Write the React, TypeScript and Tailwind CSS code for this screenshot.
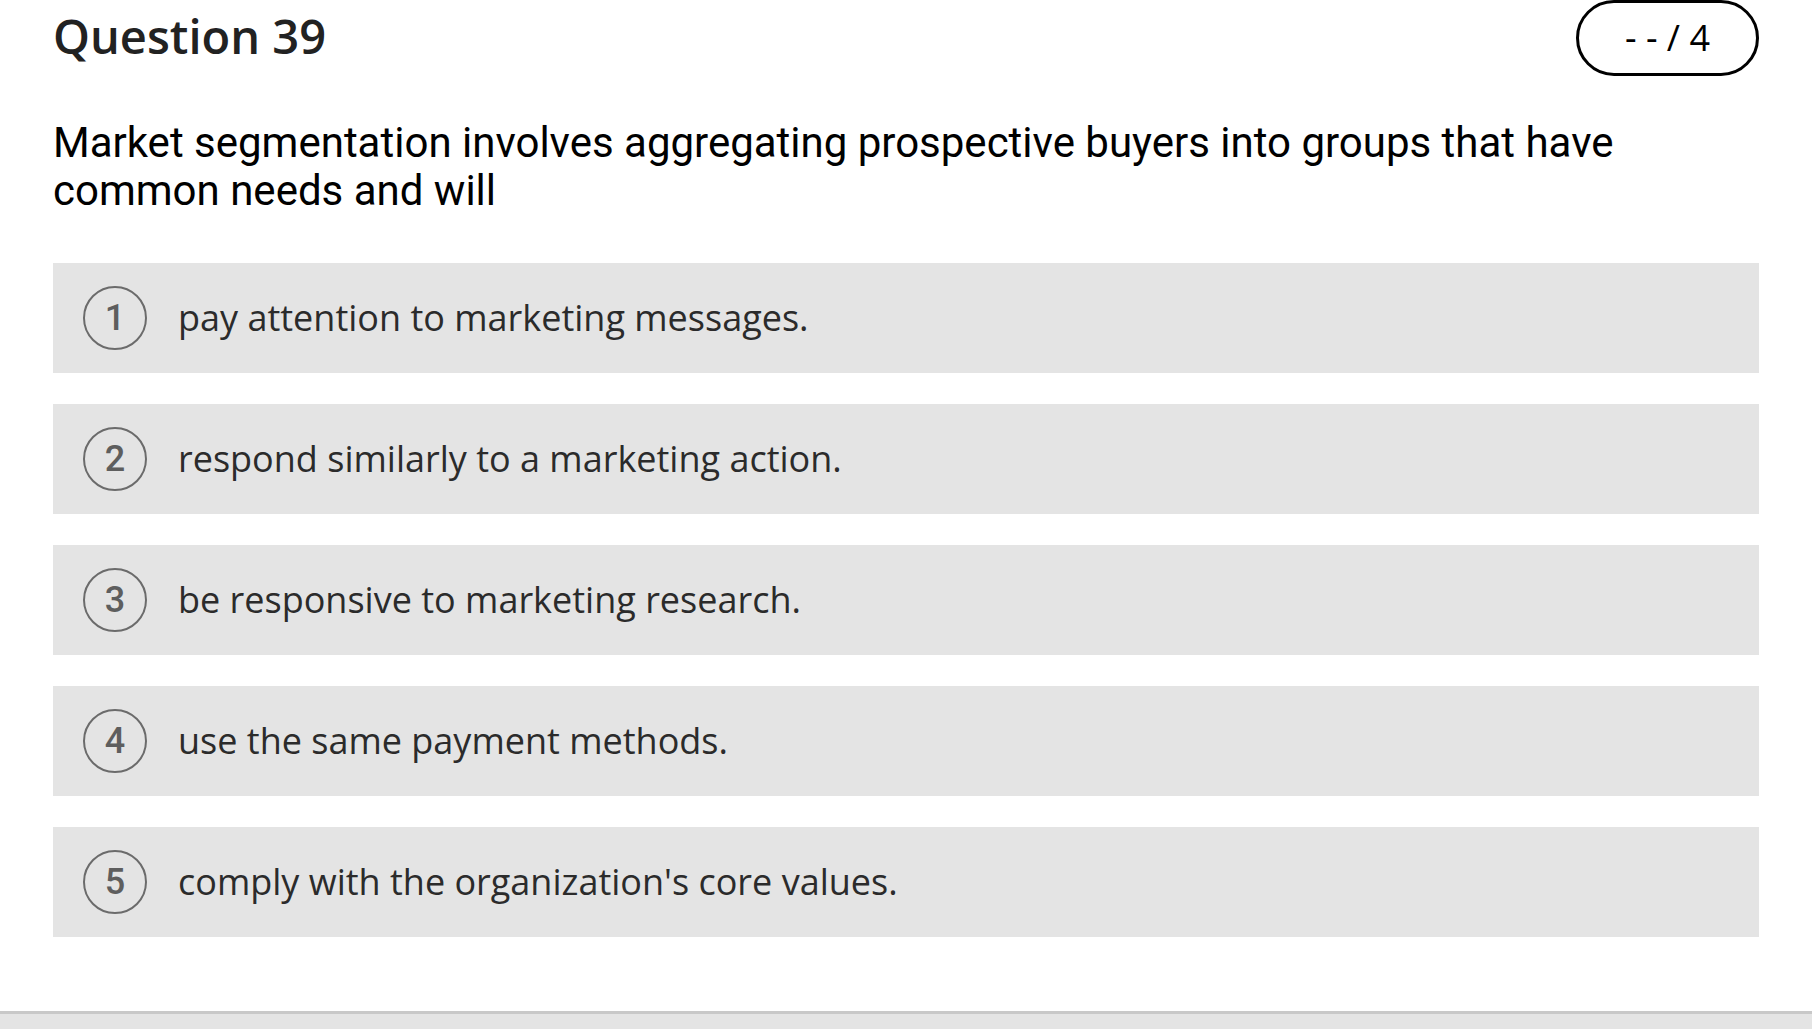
const options = [
  "pay attention to marketing messages.",
  "respond similarly to a marketing action.",
  "be responsive to marketing research.",
  "use the same payment methods.",
  "comply with the organization's core values.",
];

export default function App() {
  return (
    <div className="flex min-h-screen flex-col bg-white">
      <div className="px-[53px]">
        {/* Header */}
        <div className="flex h-[76px] items-center justify-between">
          <h1 className="-mt-[3px] font-['Open_Sans',sans-serif] text-[47px] font-semibold text-[#222]">
            Question 39
          </h1>
          <div className="flex h-[76px] w-[183px] items-center justify-center rounded-full border-[3px] border-black font-['Open_Sans',sans-serif] text-[36px] font-medium text-black">
            - - / 4
          </div>
        </div>

        {/* Question */}
        <p className="mt-[43px] font-['Roboto',sans-serif] text-[42px] leading-[48px] text-black">
          Market segmentation involves aggregating prospective buyers into groups that have common needs and will
        </p>

        {/* Answers */}
        <div className="mt-[48px] flex flex-col gap-[31px]">
          {options.map((text, i) => (
            <div key={i} className="flex h-[110px] items-center bg-[#e4e4e4] pl-[30px]">
              <div className="flex h-[64px] w-[64px] shrink-0 items-center justify-center rounded-full border-2 border-[#6b6b6b] font-['Roboto',sans-serif] text-[36px] font-medium text-[#5e5e5e]">
                {i + 1}
              </div>
              <span className="ml-[31px] font-['Open_Sans',sans-serif] text-[36px] text-[#2b2b2b]">
                {text}
              </span>
            </div>
          ))}
        </div>
      </div>

      <div className="mt-[74px] flex-1 border-t-[3px] border-[#c8c8c8] bg-[#e4e4e4]" />
    </div>
  );
}
